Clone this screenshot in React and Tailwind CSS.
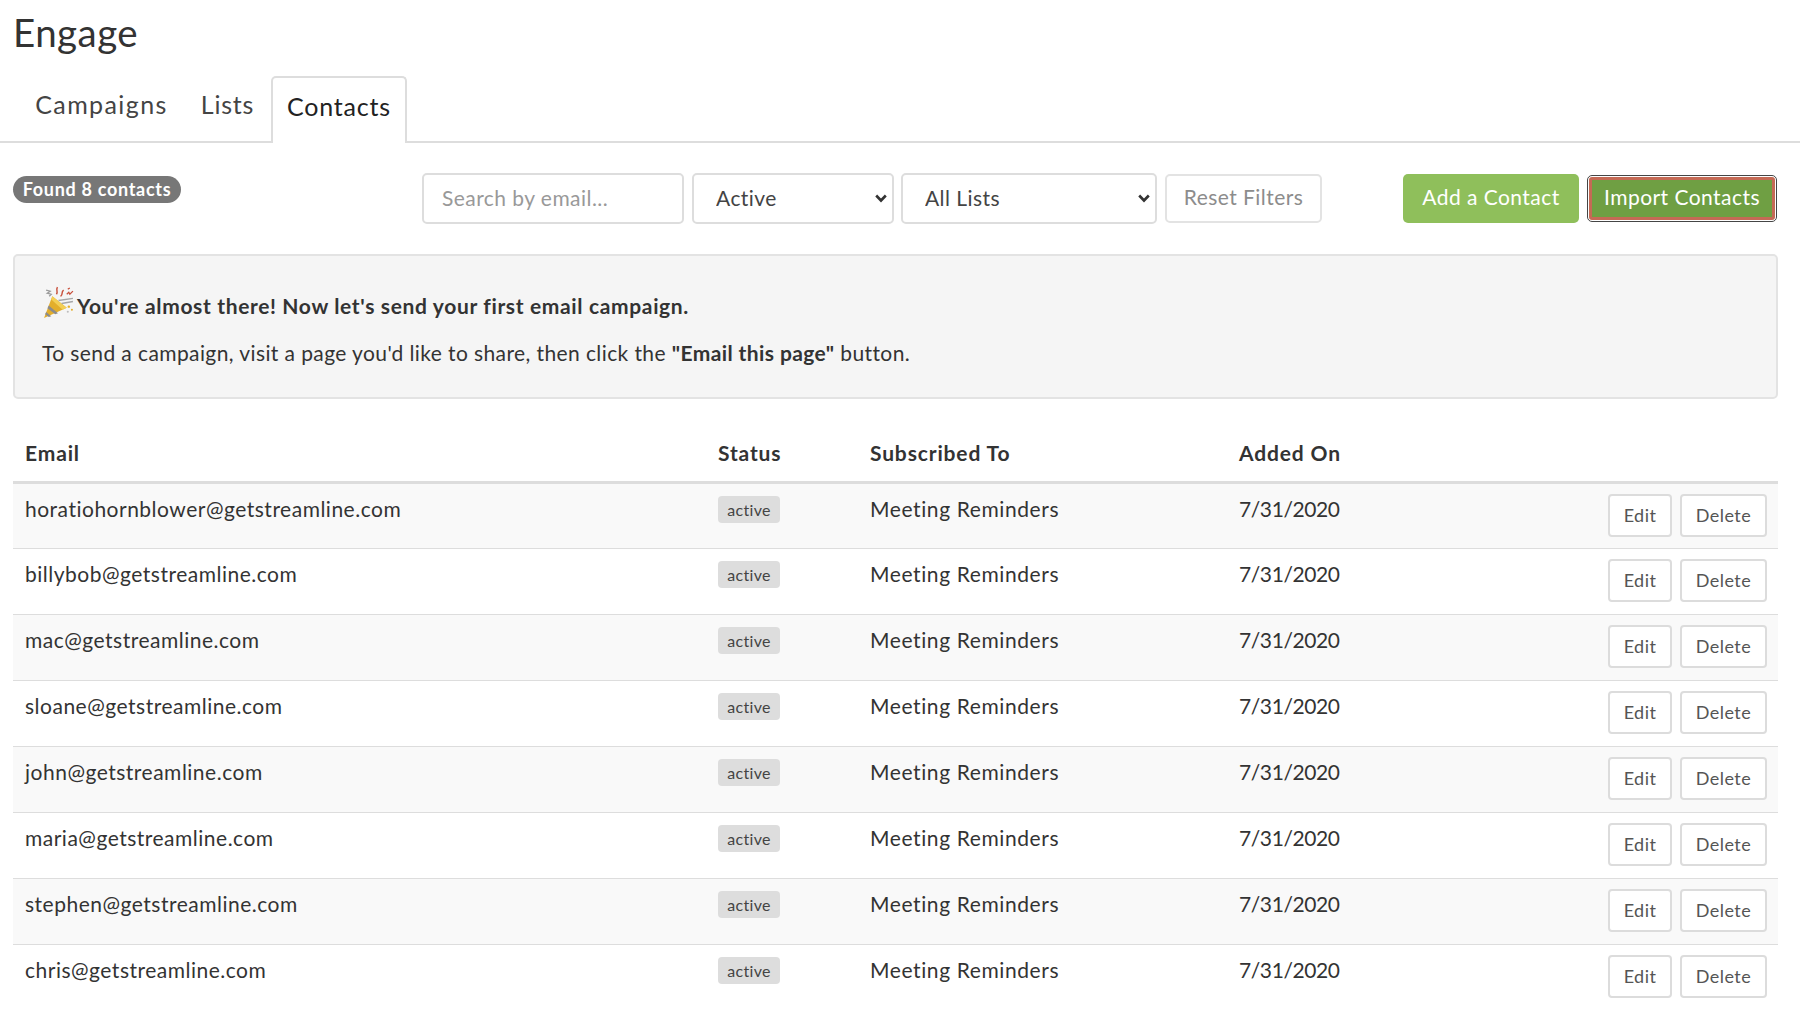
const emails = [
  "horatiohornblower@getstreamline.com",
  "billybob@getstreamline.com",
  "mac@getstreamline.com",
  "sloane@getstreamline.com",
  "john@getstreamline.com",
  "maria@getstreamline.com",
  "stephen@getstreamline.com",
  "chris@getstreamline.com",
];

function Popper() {
  return (
    <svg viewBox="0 0 32 32" className="w-[33px] h-[33px] shrink-0 -translate-y-[4px]">
      <path d="M2 31 L10 10 L24 21 Z" fill="#e3ae2b" />
      <path d="M10 10 L24 21 L20 23 L9 13 Z" fill="#f3cf55" />
      <path d="M6.5 19 L15.5 26.5 L12.8 27.5 L5.3 21.5 Z" fill="#8c8c8c" />
      <path d="M4 25.3 L9 29.3 L6.6 30 L3 27.3 Z" fill="#8c8c8c" />
      <path d="M16 14 L30 12 M19 17 L30 15" stroke="#a6a6a6" strokeWidth="1.4" fill="none" />
      <path d="M14 8 C16 5 13 4 15 1 M18 10 C21 8 18 6 21 4" stroke="#c8503c" strokeWidth="1.4" fill="none" />
      <path d="M24 8 L26 6 L27 8 L30 5 M25 3 L27 2" stroke="#c8503c" strokeWidth="1.2" fill="none" />
      <path d="M4 4 L8 5 L5 7 L9 8 L7 10" stroke="#9a9a9a" strokeWidth="1.2" fill="none" />
      <circle cx="26" cy="20" r="1.2" fill="#e3ae2b" />
      <circle cx="29" cy="23" r="1" fill="#e3ae2b" />
      <circle cx="25" cy="25" r="1" fill="#bdbdbd" />
    </svg>
  );
}

function Chevron() {
  return (
    <svg viewBox="0 0 12 9" className="absolute right-[7px] top-[21px] w-[12px] h-[9px] pointer-events-none">
      <path d="M1.2 1.5 L6 6.5 L10.8 1.5" fill="none" stroke="#333333" strokeWidth="2.6" />
    </svg>
  );
}

function Row({ email, striped, last }) {
  return (
    <tr className={`${striped ? "bg-[#f9f9f9]" : "bg-white"} ${last ? "" : "border-b border-[#dddddd]"}`}>
      <td className="h-[66px] align-top pl-3 pt-[10px] text-[#333333] leading-[30px] tracking-[0.5px]">{email}</td>
      <td className="align-top pl-3 pt-[8px]">
        <span className="inline-flex items-center justify-center w-[62px] h-[27px] rounded-[4px] bg-[#dddddd] text-[#444444] text-[16px] tracking-[0.3px]">
          active
        </span>
      </td>
      <td className="align-top pl-3 pt-[10px] leading-[30px] tracking-[0.6px]">Meeting Reminders</td>
      <td className="align-top pl-3 pt-[10px] leading-[30px] tracking-[-0.4px]">7/31/2020</td>
      <td className="align-top pr-[11px] pt-[10px]">
        <div className="flex justify-end gap-[8px]">
          <button className="w-[64px] h-[43px] bg-white border-2 border-[#dcdcdc] rounded-[4px] text-[#555555] text-[18px]">Edit</button>
          <button className="w-[87px] h-[43px] bg-white border-2 border-[#dcdcdc] rounded-[4px] text-[#555555] text-[18px]">Delete</button>
        </div>
      </td>
    </tr>
  );
}

export default function App() {
  return (
    <div className="min-h-[1033px] bg-white text-[#333333] text-[21px] tracking-[0.45px] font-['Lato','Open_Sans',sans-serif]">
      <h1 className="pl-[13px] pt-[9px] h-[76px] text-[38.5px] leading-[46px] font-normal">Engage</h1>
      <nav className="flex items-end h-[67px] pl-[19px] border-b-2 border-[#dddddd]">
        <a className="w-[165px] h-[65px] pb-[7px] flex items-center justify-center text-[25px] text-[#444444] tracking-[1.4px]">Campaigns</a>
        <a className="w-[87px] h-[65px] pb-[7px] flex items-center justify-center text-[25px] text-[#444444] tracking-[0.8px]">Lists</a>
        <a className="w-[136px] h-[67px] pb-[7px] -mb-[2px] flex items-center justify-center text-[25px] text-[#222222] tracking-[0.8px] bg-white border-2 border-b-0 border-[#dddddd] rounded-t-[5px]">Contacts</a>
      </nav>

      <div className="flex items-start px-[13px] pt-[30px]">
        <span className="w-[168px] h-[27px] mt-[3px] flex items-center justify-center rounded-full bg-[#777777] text-white text-[18px] font-bold tracking-[0.7px]">
          Found 8 contacts
        </span>
        <input
          placeholder="Search by email..."
          className="ml-[241px] w-[262px] h-[51px] px-[18px] pb-[2px] bg-white border-2 border-[#dddddd] rounded-[5px] outline-none placeholder:text-[#999999]"
        />
        <div className="relative ml-[8px] w-[202px] h-[51px]">
          <select className="appearance-none w-full h-full px-[22px] pb-[2px] bg-white border-2 border-[#dddddd] rounded-[5px] outline-none text-[#444444]">
            <option>Active</option>
          </select>
          <Chevron />
        </div>
        <div className="relative ml-[7px] w-[256px] h-[51px]">
          <select className="appearance-none w-full h-full px-[22px] pb-[2px] bg-white border-2 border-[#dddddd] rounded-[5px] outline-none text-[#444444]">
            <option>All Lists</option>
          </select>
          <Chevron />
        </div>
        <button className="ml-[8px] mt-[1px] w-[157px] h-[49px] pb-[4px] bg-white border-2 border-[#e3e3e3] rounded-[5px] text-[#8c8c8c]">Reset Filters</button>
        <button className="ml-[81px] mt-[1px] w-[176px] h-[49px] pb-[4px] bg-[#8fbf5b] rounded-[5px] text-white">Add a Contact</button>
        <button className="ml-[10px] mr-[3px] mt-[4px] w-[186px] h-[43px] pb-[4px] bg-[#6f9f43] rounded-[3px] text-white border-[3px] border-[#c56a55] outline-[1.5px] outline-offset-[1px] outline-[#454545]">Import Contacts</button>
      </div>

      <div className="ml-[13px] mr-[22px] mt-[30px] h-[145px] bg-[#f5f5f5] border-2 border-[#e3e3e3] rounded-[5px] pl-[27px] pt-[32px] tracking-[0.4px]">
        <div className="flex items-center gap-[2px] h-[36px] font-bold tracking-[0.65px]">
          <Popper />
          <span>You're almost there! Now let's send your first email campaign.</span>
        </div>
        <p className="mt-[14px] leading-[30px]">
          To send a campaign, visit a page you'd like to share, then click the <b>"Email this page"</b> button.
        </p>
      </div>

      <div className="pl-[13px] pr-[22px] pt-[37px]">
        <table className="w-full table-fixed border-collapse">
          <colgroup>
            <col className="w-[693px]" />
            <col className="w-[152px]" />
            <col className="w-[369px]" />
            <col className="w-[236px]" />
            <col />
          </colgroup>
          <thead>
            <tr className="border-b-[3px] border-[#dddddd] tracking-[0.85px]">
              <th className="h-[46px] pl-3 pb-[12px] text-left font-bold">Email</th>
              <th className="pl-3 pb-[12px] text-left font-bold">Status</th>
              <th className="pl-3 pb-[12px] text-left font-bold">Subscribed To</th>
              <th className="pl-3 pb-[12px] text-left font-bold">Added On</th>
              <th />
            </tr>
          </thead>
          <tbody>
            {emails.map((e, i) => (
              <Row key={e} email={e} striped={i % 2 === 0} last={i === emails.length - 1} />
            ))}
          </tbody>
        </table>
      </div>
    </div>
  );
}
